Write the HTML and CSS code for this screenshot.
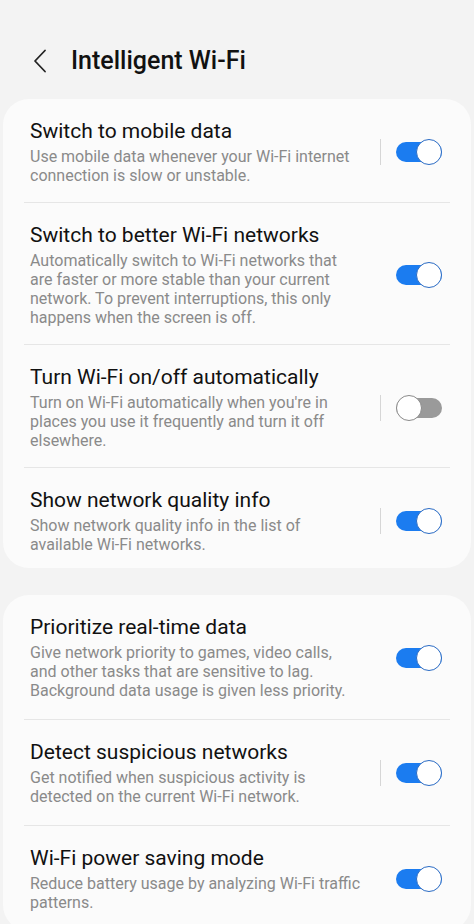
FILE: index.html
```html
<!DOCTYPE html>
<html lang="en">
<head>
   <meta charset="UTF-8">
   <meta name="viewport" content="width=device-width, initial-scale=1.0">
   <title>Intelligent Wi-Fi</title>
   <link rel="stylesheet" href="styles.css">
</head>
<body>
   <header class="topbar">
      <svg class="back" width="14" height="24" viewBox="0 0 14 24">
         <path d="M12 1.5 L2 12 L12 22.5" fill="none" stroke="#222" stroke-width="1.8" stroke-linecap="round" stroke-linejoin="round"/>
      </svg>
      <h1>Intelligent Wi-Fi</h1>
   </header>

   <section class="card">
      <div class="item">
         <div class="text">
            <h2>Switch to mobile data</h2>
            <p>Use mobile data whenever your Wi-Fi internet connection is slow or unstable.</p>
         </div>
         <span class="sep"></span>
         <span class="switch on"><span class="knob"></span></span>
      </div>
      <div class="item">
         <div class="text">
            <h2>Switch to better Wi-Fi networks</h2>
            <p>Automatically switch to Wi-Fi networks that are faster or more stable than your current network. To prevent interruptions, this only happens when the screen is off.</p>
         </div>
         <span class="switch on"><span class="knob"></span></span>
      </div>
      <div class="item">
         <div class="text">
            <h2>Turn Wi-Fi on/off automatically</h2>
            <p>Turn on Wi-Fi automatically when you're in places you use it frequently and turn it off elsewhere.</p>
         </div>
         <span class="sep"></span>
         <span class="switch"><span class="knob"></span></span>
      </div>
      <div class="item">
         <div class="text">
            <h2>Show network quality info</h2>
            <p>Show network quality info in the list of available Wi-Fi networks.</p>
         </div>
         <span class="sep"></span>
         <span class="switch on"><span class="knob"></span></span>
      </div>
   </section>

   <section class="card card-second">
      <div class="item">
         <div class="text">
            <h2>Prioritize real-time data</h2>
            <p>Give network priority to games, video calls, and other tasks that are sensitive to lag. Background data usage is given less priority.</p>
         </div>
         <span class="switch on"><span class="knob"></span></span>
      </div>
      <div class="item">
         <div class="text">
            <h2>Detect suspicious networks</h2>
            <p>Get notified when suspicious activity is detected on the current Wi-Fi network.</p>
         </div>
         <span class="sep"></span>
         <span class="switch on"><span class="knob"></span></span>
      </div>
      <div class="item">
         <div class="text">
            <h2>Wi-Fi power saving mode</h2>
            <p>Reduce battery usage by analyzing Wi-Fi traffic patterns.</p>
         </div>
         <span class="switch on"><span class="knob"></span></span>
      </div>
   </section>
</body>
</html>
```

FILE: styles.css
```css
* {
   margin: 0;
   padding: 0;
   box-sizing: border-box;
   font-family: Roboto, "Liberation Sans", sans-serif;
}

body {
   background-color: #f3f3f3;
   width: 474px;
   height: 924px;
   overflow: hidden;
   padding: 0 3px;
}

.topbar {
   display: flex;
   align-items: center;
   height: 99px;
   padding: 22px 0 0 30px;
}

.back {
   margin-right: 24px;
}

.topbar h1 {
   font-size: 25px;
   font-weight: 500;
   color: #111;
}

.card {
   background-color: #fbfbfb;
   border-radius: 26px;
   padding: 0 21px 0 21px;
   margin-bottom: 27px;
}

.item {
   display: flex;
   align-items: center;
   padding: 20px 0 17px 6px;
   border-bottom: 1px solid #e6e6e6;
}

.item:last-child {
   border-bottom: none;
   padding-bottom: 14px;
}

.card-second .item {
   padding-bottom: 19px;
}

.text {
   width: 332px;
   margin-right: auto;
}

.text h2 {
   font-size: 21px;
   font-weight: 400;
   line-height: 24px;
   color: #111;
   margin-bottom: 4px;
}

.text p {
   font-size: 16px;
   line-height: 19px;
   color: #8a8a8a;
}

.sep {
   width: 1px;
   height: 26px;
   background-color: #d6d6d6;
   margin-right: 15px;
}

.switch {
   position: relative;
   width: 46px;
   height: 20px;
   border-radius: 10px;
   background-color: #9a9a9a;
   margin-right: 8px;
   flex-shrink: 0;
}

.switch.on {
   background-color: #1b7cf0;
}

.knob {
   position: absolute;
   top: -3px;
   left: 0;
   width: 26px;
   height: 26px;
   border-radius: 50%;
   background-color: #fff;
   border: 1.5px solid #8a8a8a;
}

.switch.on .knob {
   left: auto;
   right: 0;
   border-color: #2a6bc4;
}
```
